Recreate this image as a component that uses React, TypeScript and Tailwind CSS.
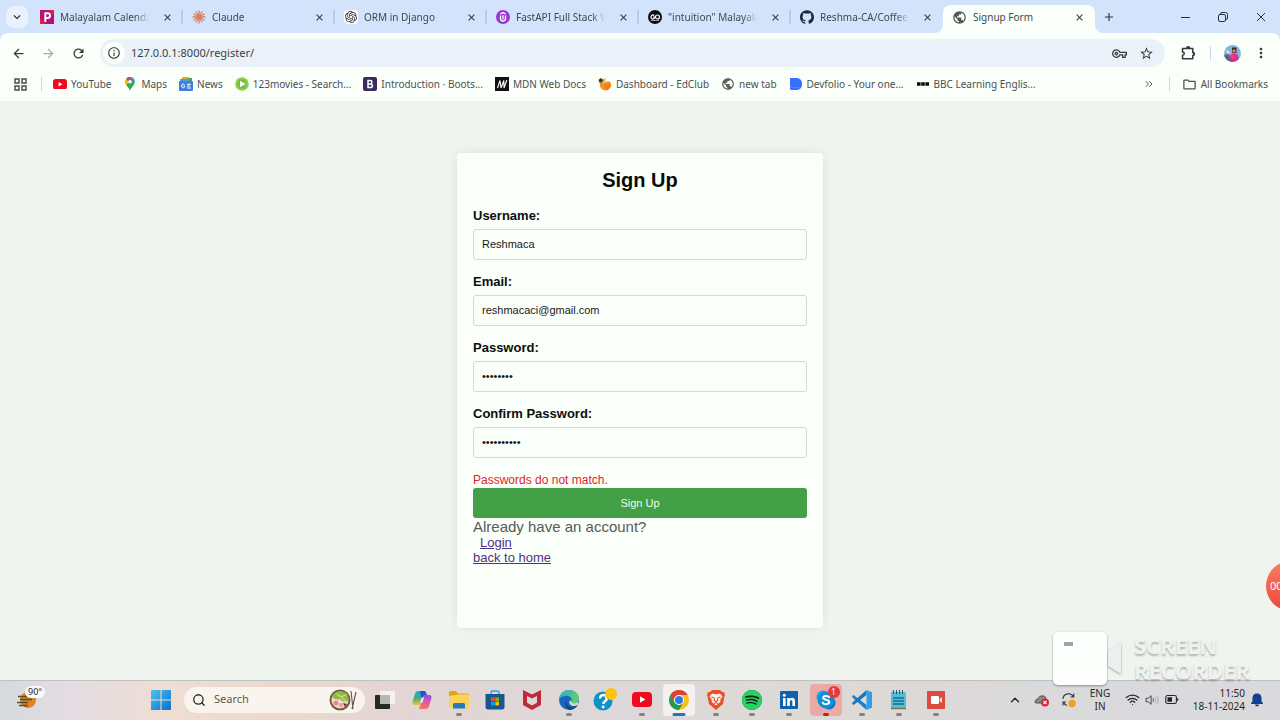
import type { ReactNode } from "react";
import {
  MdArrowBack,
  MdArrowForward,
  MdClose,
  MdExpandMore,
  MdInfoOutline,
  MdMoreVert,
  MdOutlineFolder,
  MdOutlineVpnKey,
  MdPublic,
  MdRefresh,
  MdStarBorder,
  MdAdd,
} from "react-icons/md";
import { SiOpenai, SiSpotify, SiGithub } from "react-icons/si";
import { ChevronUp, ChevronsRight, Search, Wifi } from "lucide-react";

type Item = { label: string; icon: ReactNode };

/* ---------- Favicons ---------- */

const CalendarIcon = () => (
  <svg viewBox="0 0 14 14" className="size-3.5">
    <rect width="14" height="14" fill="#b5107c" />
    <path d="M0 14V8l6 6zM9 0h5v6z" fill="#e5232e" />
    <path d="M5.3 12V3.2h2.4a2.4 2.4 0 0 1 0 4.8H5.3" fill="none" stroke="#fff" strokeWidth="2" />
  </svg>
);

const ClaudeIcon = () => (
  <svg viewBox="0 0 14 14" className="size-3.5" stroke="#dd7d5e" strokeWidth="1.3" strokeLinecap="round">
    <path d="M7 7V1M7 7l3-5.2M7 7l5.2-3M7 7h6M7 7l5 3M7 7l3 5M7 7v6M7 7l-3 5M7 7l-5.200 3M7 7H1M7 7L1.800 4M7 7L4 1.800" />
  </svg>
);

const OpenAiIcon = () => (
  <span className="flex size-3.5 items-center justify-center rounded-sm bg-[#fbfff9]">
    <SiOpenai className="size-3 text-[#2b2f2f]" />
  </span>
);

const UdemyIcon = () => (
  <svg viewBox="0 0 14 14" className="size-3.5">
    <circle cx="7" cy="7" r="7" fill="#9a35cf" />
    <path d="M4.500 5.500v3a2.500 2.500 0 0 0 5 0v-3M7 5.200v4M4.300 4L7 2.600 9.700 4" fill="none" stroke="#fff" strokeWidth="1.300" />
  </svg>
);

const GoIcon = () => (
  <svg viewBox="0 0 14 14" className="size-3.5">
    <circle cx="7" cy="7" r="7" fill="#0b0e10" />
    <path d="M6.300 5.500A2 2 0 1 0 6.300 8.500V7H5" fill="none" stroke="#fff" strokeWidth="1.200" />
    <circle cx="9.500" cy="7" r="2" fill="none" stroke="#fff" strokeWidth="1.200" />
    <path d="M3 10.500h8" stroke="#fff" strokeWidth=".6" />
  </svg>
);

const tabs: Item[] = [
  { label: "Malayalam Calendar", icon: <CalendarIcon /> },
  { label: "Claude", icon: <ClaudeIcon /> },
  { label: "ORM in Django", icon: <OpenAiIcon /> },
  { label: "FastAPI Full Stack We", icon: <UdemyIcon /> },
  { label: "\"intuition\" Malayalam", icon: <GoIcon /> },
  { label: "Reshma-CA/Coffee_s", icon: <SiGithub className="size-3.5 text-[#1d2838]" /> },
  { label: "Signup Form", icon: <MdPublic className="size-[15px] text-[#55595b]" /> },
];

const YouTubeIcon = ({ className }: { className: string }) => (
  <svg viewBox="0 0 20 15" className={className}>
    <rect width="20" height="15" rx="4" fill="#f00a21" />
    <path d="M8 4.300v6.400l5.400-3.200z" fill="#fff" />
  </svg>
);

const MapsIcon = () => (
  <svg viewBox="0 0 14 14" className="size-3.5">
    <path d="M7 14C6.300 10.500 2.200 8.700 2.200 4.800A4.800 4.800 0 0 1 11.800 4.800C11.800 8.700 7.700 10.500 7 14z" fill="#34a853" />
    <path d="M3.300 1.700L7 4.800 3 8.100C1.900 6.300 1.700 3.700 3.300 1.700z" fill="#fbbc04" />
    <path d="M3.300 1.700A4.800 4.800 0 0 1 8.500.2L5 4.300z" fill="#ea4335" />
    <path d="M8.500.2a4.800 4.800 0 0 1 2.900 2.600L7.500 6.500 5.200 4.200z" fill="#4285f4" />
    <circle cx="7" cy="4.800" r="1.700" fill="#fff" />
  </svg>
);

const NewsIcon = () => (
  <svg viewBox="0 0 14 14" className="size-3.5">
    <path d="M3 0h7v4H3z" fill="#e9a928" />
    <path d="M9 1h4v4H9z" fill="#4ba25b" />
    <path d="M1 2h9v4H1z" fill="#4f97d9" />
    <rect y="4" width="14" height="10" rx="1" fill="#3f7fdb" />
    <path d="M5.500 7.500a1.800 1.800 0 1 0 .2 2.500V9H4.500M8 7.300h4M8 9h3M8 11h4" fill="none" stroke="#fff" strokeWidth="1" />
  </svg>
);

const MoviesIcon = () => (
  <svg viewBox="0 0 14 14" className="size-3.5">
    <circle cx="7" cy="7" r="6.800" fill="#8fd04c" />
    <circle cx="7" cy="7" r="4.800" fill="#76bd38" />
    <path d="M5 3.700v6.600L10.600 7z" fill="#fff" />
  </svg>
);

const BootstrapIcon = () => (
  <svg viewBox="0 0 14 14" className="size-3.5">
    <rect width="14" height="14" rx="2" fill="#3b2a5e" />
    <path d="M5 3.500v7h2.600a1.800 1.800 0 0 0 0-3.600H5h2.200a1.700 1.700 0 0 0 0-3.400z" fill="none" stroke="#fff" strokeWidth="1.500" />
  </svg>
);

const MdnIcon = () => (
  <svg viewBox="0 0 14 14" className="size-3.5">
    <rect width="14" height="14" fill="#101010" />
    <path d="M2.500 11L5 3.500 6 11l2.800-7.500L9 11l2.800-8" fill="none" stroke="#fff" strokeWidth="1.100" />
  </svg>
);

const EdClubIcon = () => (
  <svg viewBox="0 0 14 14" className="size-3.5">
    <path d="M2 6C4.500 5 6 6.500 8 5c1.500-1.300 3.500-1 4.500.5 1.500 3-.5 7.500-5 7.900C4 13.500 1 10 2 6z" fill="#f29222" />
    <path d="M6 7c3 1.500 5 .5 7-1 .5 3.500-1.500 7-5 7.300z" fill="#ef7a1a" />
    <path d="M.5 3L2.500 1 5 2.500 4.500 5.500 1.500 5.800z" fill="#4b3513" />
    <path d="M5 2.500L7 1l.5 3.500L5 6z" fill="#f2a93a" />
  </svg>
);

const DevfolioIcon = () => (
  <svg viewBox="0 0 14 14" className="size-3.5">
    <path d="M1 1h6.500C11 1 13 3.500 13 7s-2 6-5.500 6H2.500A1.500 1.500 0 0 1 1 11.500z" fill="#3770ff" />
    <path d="M1 10.500h9" stroke="#6f9bff" strokeWidth=".5" />
  </svg>
);

const BbcIcon = () => (
  <svg viewBox="0 0 14 14" className="size-3.5">
    <path d="M1 5.200h3.600v3.600H1zM5.200 5.200h3.600v3.600H5.200zM9.400 5.200H13v3.600H9.400z" fill="#0a0a0a" />
  </svg>
);

const bookmarks: Item[] = [
  { label: "YouTube", icon: <YouTubeIcon className="w-3.5" /> },
  { label: "Maps", icon: <MapsIcon /> },
  { label: "News", icon: <NewsIcon /> },
  { label: "123movies - Search...", icon: <MoviesIcon /> },
  { label: "Introduction · Boots...", icon: <BootstrapIcon /> },
  { label: "MDN Web Docs", icon: <MdnIcon /> },
  { label: "Dashboard - EdClub", icon: <EdClubIcon /> },
  { label: "new tab", icon: <MdPublic className="size-3.5 text-[#5b5f60]" /> },
  { label: "Devfolio - Your one...", icon: <DevfolioIcon /> },
  { label: "BBC Learning Englis...", icon: <BbcIcon /> },
];

/* ---------- Browser chrome ---------- */

function TabStrip() {
  return (
    <div className="flex h-[33px] items-stretch bg-[#d3e3fb]">
      <div className="flex w-[31px] shrink-0 items-center pl-[6px]">
        <button aria-label="Search tabs" className="flex size-[22px] items-center justify-center rounded-lg bg-[#e9f1fb] text-[#1f2429]">
          <MdExpandMore className="size-[14px]" />
        </button>
      </div>
      <div className="flex min-w-0 max-w-[1064px] flex-1">
        {tabs.map((tab, i) => {
          const active = i === tabs.length - 1;
          return (
            <div key={tab.label} className={"relative min-w-0 flex-1 " + (active ? "pt-[5px]" : "py-[5px]")}>
              <div
                className={
                  "flex items-center " +
                  (active ? "h-7 rounded-t-lg bg-[#fbfff9] pr-1.5 pb-1 pl-[9px]" : "h-6 pl-[9px]")
                }
              >
                <span className="shrink-0">{tab.icon}</span>
                <button
                  className={
                    "ml-1.5 min-w-0 flex-1 overflow-hidden text-left text-[10px] whitespace-nowrap text-[#40484f] " +
                    (active ? "" : "mask-r-from-85% mask-r-to-100%")
                  }
                >
                  {tab.label}
                </button>
                <button aria-label={"Close " + tab.label} className="ml-2 flex size-5 shrink-0 items-center justify-center text-[#263442]">
                  <MdClose className="size-[11px]" />
                </button>
                {!active && <span className={"ml-1 h-3.5 w-0.5 shrink-0 " + (i < tabs.length - 2 ? "bg-[#b4cdf4]" : "")} />}
              </div>
              {active && (
                <>
                  <svg viewBox="0 0 8 8" className="absolute bottom-0 -left-2 size-2">
                    <path d="M8 0v8H0a8 8 0 0 0 8-8z" fill="#fbfff9" />
                  </svg>
                  <svg viewBox="0 0 8 8" className="absolute -right-2 bottom-0 size-2">
                    <path d="M0 0v8h8a8 8 0 0 1-8-8z" fill="#fbfff9" />
                  </svg>
                </>
              )}
            </div>
          );
        })}
      </div>
      <button aria-label="New tab" className="flex w-7 shrink-0 items-center justify-center text-[#2c3945]">
        <MdAdd className="size-[14px]" />
      </button>
      <div className="ml-auto flex shrink-0 text-[#26323c]">
        <button aria-label="Minimise" className="flex w-[38px] items-center justify-center">
          <svg viewBox="0 0 10 10" className="size-2.5" stroke="currentColor"><path d="M1 5.500h9" /></svg>
        </button>
        <button aria-label="Restore" className="flex w-[38px] items-center justify-center">
          <svg viewBox="0 0 10 10" className="size-2.5" fill="none" stroke="currentColor">
            <rect x=".5" y="2.500" width="7" height="7" rx="1.500" />
            <path d="M2.500 2.500V2A1.500 1.500 0 0 1 4 .5h3.500a2 2 0 0 1 2 2V6A1.500 1.500 0 0 1 8 7.500h-.500" />
          </svg>
        </button>
        <button aria-label="Close window" className="flex w-[38px] items-center justify-center">
          <svg viewBox="0 0 10 10" className="size-2.5" stroke="currentColor"><path d="M1 1l8 8M9 1L1 9" /></svg>
        </button>
      </div>
    </div>
  );
}

function Toolbar() {
  return (
    <div className="bg-[#d3e3fb]">
      <div className="flex h-10 items-center rounded-t-lg bg-[#fbfff9] text-[#343a3d]">
        <div className="flex w-[100px] shrink-0 pl-[3px]">
          <button aria-label="Back" className="flex w-[30px] justify-center"><MdArrowBack className="size-[15px]" /></button>
          <button aria-label="Forward" className="flex w-[30px] justify-center text-[#a3a8aa]"><MdArrowForward className="size-[15px]" /></button>
          <button aria-label="Reload" className="flex w-[30px] justify-center"><MdRefresh className="size-[15px]" /></button>
        </div>
        <div className="flex h-7 min-w-0 flex-1 items-center rounded-full bg-[#eaf1f9] px-[3px]">
          <button aria-label="Site information" className="flex size-[22px] items-center justify-center rounded-full bg-[#fbfff9]">
            <MdInfoOutline className="size-[14px]" />
          </button>
          <input
            aria-label="Address"
            defaultValue="127.0.0.1:8000/register/"
            className="ml-1.5 min-w-0 flex-1 bg-transparent text-[11px] text-[#3a3f45] outline-none"
          />
          <button aria-label="Passwords" className="flex w-[27px] justify-center"><MdOutlineVpnKey className="size-[15px]" /></button>
          <button aria-label="Bookmark" className="mr-0.5 flex w-[27px] justify-center"><MdStarBorder className="size-[15px]" /></button>
        </div>
        <button aria-label="Extensions" className="flex w-[45px] shrink-0 justify-center">
          <svg viewBox="0 0 16 16" className="size-4" fill="none" stroke="currentColor" strokeWidth="1.500" strokeLinejoin="round">
            <path d="M2.500 3.500h10.300v4a1.600 1.600 0 0 1 0 3v3.300H2.500v-3.500a1.700 1.700 0 0 0 0-3.400z" />
            <path d="M6.800 3.200a1.400 1.400 0 0 1 2.800 0M13 7.600a1.400 1.400 0 0 1 0 2.800" fill="currentColor" />
          </svg>
        </button>
        <span className="h-3.5 w-px rounded bg-[#c9d9f2]" />
        <button aria-label="Profile" className="ml-[13px] shrink-0">
          <svg viewBox="0 0 17 17" className="size-[17px]">
            <defs><clipPath id="avatar"><circle cx="8.500" cy="8.500" r="8.500" /></clipPath></defs>
            <g clipPath="url(#avatar)">
              <rect width="17" height="17" fill="#85b5dd" />
              <path d="M0 10l5-1 4 8H0z" fill="#4f6690" />
              <path d="M2 5l4 2-2 3z" fill="#f2e7e4" />
              <path d="M6 17l1-7 3-2 4 2 1 7z" fill="#e02c86" />
              <path d="M3 8l5 3 1-2 2 3-2 2-6-4z" fill="#e23f90" />
              <path d="M8 2.500h4.500V8H8z" fill="#40282d" />
              <circle cx="10" cy="6" r="1.700" fill="#c98771" />
            </g>
          </svg>
        </button>
        <button aria-label="Menu" className="flex w-[39px] shrink-0 justify-center"><MdMoreVert className="size-4" /></button>
      </div>
    </div>
  );
}

function BookmarksBar() {
  return (
    <nav className="flex h-7 items-center bg-[#fbfff9] pb-1.5 text-[10px] whitespace-nowrap text-[#4b5052]">
      <button aria-label="Apps" className="flex w-[41px] shrink-0 justify-center">
        <svg viewBox="0 0 13 13" className="size-[13px]" fill="none" stroke="#444a4c" strokeWidth="1.400">
          <path d="M1 1h4v4H1zM8 1h4v4H8zM1 8h4v4H1zM8 8h4v4H8z" />
        </svg>
      </button>
      <span className="h-3.5 w-px shrink-0 bg-[#c9d9f2]" />
      <div className="ml-[11px] flex min-w-0 flex-1 items-center gap-3 overflow-hidden">
        {bookmarks.map((b) => (
          <a key={b.label} href="#" className="flex shrink-0 items-center gap-1">
            {b.icon}
            {b.label}
          </a>
        ))}
      </div>
      <button aria-label="More bookmarks" className="px-3.5"><ChevronsRight className="size-3" /></button>
      <span className="h-3.5 w-px shrink-0 bg-[#c9d9f2]" />
      <a href="#" className="mr-3 ml-3 flex items-center gap-1">
        <MdOutlineFolder className="size-[15px]" />
        All Bookmarks
      </a>
    </nav>
  );
}

/* ---------- Sign-up form ---------- */

const fields = [
  { id: "username", label: "Username:", type: "text", value: "Reshmaca" },
  { id: "email", label: "Email:", type: "email", value: "reshmacaci@gmail.com" },
  { id: "password", label: "Password:", type: "password", value: "abcd1234" },
  { id: "confirm", label: "Confirm Password:", type: "password", value: "abcd123456" },
];

function SignupCard() {
  return (
    <div className="w-full max-w-[366px] rounded bg-[#fbfff9] px-4 pt-4 pb-[63px] font-['Liberation_Sans',Arial,sans-serif] text-[13px] shadow-[0_0_8px_rgba(0,0,0,0.08)]">
      <h2 className="mb-4 text-center text-xl/[23px] font-bold text-[#090b0a]">Sign Up</h2>
      <form onSubmit={(e) => e.preventDefault()}>
        {fields.map((f) => (
          <div key={f.id} className="mb-3.5">
            <label htmlFor={f.id} className="mb-[5px] block leading-4 font-bold text-[#0c0e0d]">{f.label}</label>
            <input
              id={f.id}
              type={f.type}
              defaultValue={f.value}
              className="block h-[31px] w-full rounded-[3px] border border-[#d5d9d5] bg-transparent px-2 pb-0.5 text-[11px] text-[#171918] outline-none"
            />
          </div>
        ))}
        <p className="text-xs/4 text-[#dc2430]">Passwords do not match.</p>
        <button type="submit" className="block h-[30px] w-full rounded-[3px] bg-[#43a047] text-[11px] text-[#f1faef]">Sign Up</button>
      </form>
      <p className="text-[15px]/[17px] text-[#565b57]">Already have an account?</p>
      <a href="#" className="ml-[7px] block w-fit leading-[15px] text-[#55308a] underline">Login</a>
      <a href="#" className="block w-fit leading-[15px] text-[#55308a] underline">back to home</a>
    </div>
  );
}

/* ---------- Taskbar ---------- */

const TaskViewIcon = () => (
  <svg viewBox="0 0 20 20" className="size-5">
    <rect y="5" width="15" height="14" rx="1" fill="#262726" />
    <rect x="5" y="1" width="15" height="13" rx="1" fill="#f5f2ee" />
    <rect x="5" y="5" width="10" height="9" fill="#b9b7b4" />
  </svg>
);

const CopilotIcon = () => (
  <svg viewBox="0 0 20 20" className="size-5">
    <defs>
      <linearGradient id="copA" x1="0" y1="0" x2="0" y2="1"><stop stopColor="#25a8e8" /><stop offset=".5" stopColor="#3fae7d" /><stop offset="1" stopColor="#f2c230" /></linearGradient>
      <linearGradient id="copB" x1="0" y1="0" x2="0" y2="1"><stop stopColor="#8a50df" /><stop offset=".5" stopColor="#df56ac" /><stop offset="1" stopColor="#f77b49" /></linearGradient>
    </defs>
    <path d="M6 1h7L9 13c-.5 1.500-1.500 2-3 2H3c-2 0-3-1.500-2.400-3.500l2.500-8C3.600 2 4.500 1 6 1z" fill="url(#copA)" />
    <path d="M14 19H7l4-12c.5-1.500 1.500-2 3-2h3c2 0 3 1.500 2.400 3.500l-2.500 8C16.400 18 15.500 19 14 19z" fill="url(#copB)" />
    <path d="M8 1h4c1.500 0 2 1 2.500 2.500L15 5h-1c-1.500 0-2.500.5-3 2l-.6 1.800C9 8 8.500 4 8 1z" fill="#2456c8" />
    <path d="M9.700 7.500h2.500l-2 5.500H8z" fill="#efeae8" />
  </svg>
);

const FolderIcon = () => (
  <svg viewBox="0 0 20 20" className="size-5">
    <path d="M0 2.500A1.500 1.500 0 0 1 1.500 1H7l2 2.500h9.500A1.500 1.500 0 0 1 20 5v12H0z" fill="#e3a21a" />
    <path d="M0 6l9-1.500h11v13a1 1 0 0 1-1 1H1a1 1 0 0 1-1-1z" fill="#fcd35a" />
    <path d="M4 18.500v-4A1.500 1.500 0 0 1 5.500 13h9a1.500 1.500 0 0 1 1.500 1.500v4z" fill="#1f7bc4" />
  </svg>
);

const StoreIcon = () => (
  <svg viewBox="0 0 20 20" className="size-5">
    <path d="M6 5V2.500A1.500 1.500 0 0 1 7.500 1h5A1.500 1.500 0 0 1 14 2.500V5" fill="none" stroke="#2ba2df" strokeWidth="1.500" />
    <path d="M.5 4h19v13a2.500 2.500 0 0 1-2.500 2.500H3A2.500 2.500 0 0 1 .5 17z" fill="#195591" />
    <path d="M6 7.500h3.700v3.700H6z" fill="#f25022" /><path d="M10.300 7.500H14v3.700h-3.700z" fill="#7fba00" />
    <path d="M6 11.800h3.700v3.700H6z" fill="#00a4ef" /><path d="M10.300 11.800H14v3.700h-3.700z" fill="#ffb900" />
  </svg>
);

const McAfeeIcon = () => (
  <svg viewBox="0 0 20 20" className="size-5">
    <path d="M1 0l9 4.500L19 0v15l-9 5-9-5zm4 6v6.800l5 2.700 5-2.700V6l-5 2.600z" fill="#bd2b38" fillRule="evenodd" />
  </svg>
);

const EdgeIcon = () => (
  <svg viewBox="0 0 20 20" className="size-5">
    <defs>
      <linearGradient id="edgeA" x1="0" y1="0" x2="1" y2=".3"><stop stopColor="#28a9db" /><stop offset="1" stopColor="#5dd06a" /></linearGradient>
    </defs>
    <circle cx="10" cy="10" r="10" fill="#1869bd" />
    <path d="M0 10C.5 4 5 0 10 0c6 0 10 4 10 8.500 0 3-2.300 4.700-5 4.700-2 0-3-.8-2.500-2C13.500 8 10.500 5.500 7 5.800 3.500 6 1 7.500 0 10z" fill="url(#edgeA)" />
    <path d="M8 8.500c-2 4 1 8.500 5.500 8.500 2 0 3.700-.700 5.300-2-1.800 3.200-5 5-8.500 5C6 18 5 12 8 8.500z" fill="#114a8b" />
    <path d="M12.500 11.200c-.5 1.200.5 2 2.500 2 1.700 0 3.200-.6 4.100-1.800l-.3 3.600c-3 1.500-8 1.500-8.500-2.500 0-2 1.500-2.800 2.200-1.300z" fill="#d9d7d5" />
  </svg>
);

const HelpIcon = () => (
  <svg viewBox="0 0 24 24" className="size-6">
    <circle cx="10" cy="13" r="9.500" fill="#1191c9" />
    <path d="M7 10.500a3.300 3.300 0 1 1 5 2.700c-1.200.7-1.700 1.300-1.700 2.800" fill="none" stroke="#fff" strokeWidth="2.400" />
    <circle cx="10.200" cy="19" r="1.400" fill="#fff" />
    <circle cx="18" cy="6" r="6" fill="#fcc20c" />
  </svg>
);

const ChromeIcon = () => (
  <svg viewBox="0 0 20 20" className="size-5">
    <circle cx="10" cy="10" r="10" fill="#fbc116" />
    <path d="M1.340 5A10 10 0 0 1 18.660 5H10L5.670 12.500z" fill="#df4235" />
    <path d="M1.340 5l4.330 7.500L10 15l4.330-2.500L10 20A10 10 0 0 1 1.340 5z" fill="#239a4c" />
    <circle cx="10" cy="10" r="5" fill="#fff" />
    <circle cx="10" cy="10" r="4" fill="#2f78e4" />
  </svg>
);

const LinkedInIcon = () => (
  <svg viewBox="0 0 18 18" className="size-[18px]">
    <rect width="18" height="18" rx="1" fill="#1060ad" />
    <circle cx="4.300" cy="4.300" r="1.500" fill="#fff" />
    <path d="M3 7h2.600v8H3zM7.200 7h2.500v1.100c1.300-2 5.300-1.800 5.300 2V15h-2.600v-4.400c0-2-2.600-1.800-2.600 0V15H7.200z" fill="#fff" />
  </svg>
);

const SkypeIcon = () => (
  <svg viewBox="0 0 20 20" className="size-5">
    <circle cx="7" cy="7" r="6.500" fill="#1aa6e6" /><circle cx="13" cy="13" r="6.500" fill="#0b72c8" /><circle cx="10" cy="10" r="8.500" fill="#0c90dc" />
    <path d="M13.200 7.200C12 5.500 7.200 5.500 7.200 7.800c0 2.700 6 1.300 6 4.300 0 2.600-5.200 2.600-6.400.600" fill="none" stroke="#fff" strokeWidth="2" strokeLinecap="round" />
  </svg>
);

const CodeIcon = () => (
  <svg viewBox="0 0 20 20" className="size-5">
    <path d="M0 6.300l1.500-1.200 13 10V20L1 8z" fill="#1a7fc6" />
    <path d="M0 13.700l1.500 1.200 13-10V0L1 12z" fill="#1a76bd" />
    <path d="M14.500 0L20 2.300v15.400L14.500 20z" fill="#2f9fe9" />
  </svg>
);

const NotepadIcon = () => (
  <svg viewBox="0 0 18 20" className="h-5 w-[18px]">
    <rect x="1" y="2" width="15" height="17" rx="1" fill="#52bfdb" />
    <path d="M3 8h11M3 11h11M3 14h11" stroke="#1d6c8d" strokeWidth="1.300" />
    <path d="M3.500 0v4M6.500 0v4M9.500 0v4M12.500 0v4" stroke="#26546b" />
    <path d="M1 18.500h15" stroke="#8d6f38" strokeWidth="1.500" />
  </svg>
);

const RecorderIcon = () => (
  <svg viewBox="0 0 18 18" className="size-[18px]">
    <rect width="18" height="18" fill="#dd4a40" />
    <rect x="4" y="5" width="8" height="8" rx="1" fill="#fff" />
    <path d="M12.500 8L15 6v6l-2.500-2z" fill="#fbd9d5" />
  </svg>
);

const BraveIcon = () => (
  <svg viewBox="0 0 20 20" className="size-5">
    <path d="M6 0h8l2 2 2 0 1 3-.7 2L17 14l-7 6-7-6L1.700 7 1 5l1-3h2z" fill="#e9502a" />
    <path d="M6 3.500l4 .7 4-.7 2.500 3-2.300 3.200.3 2L10 15.500l-4.500-3.800.3-2L3.500 6.500z" fill="#fbefe9" />
    <path d="M5.500 7l3 1M14.500 7l-3 1M8.500 8.500L8.200 10.500 10 11.700l1.800-1.200-.3-2M8 13.500l2-1 2 1" fill="none" stroke="#e9502a" strokeWidth="1.100" />
  </svg>
);

type App = Item & { state?: "open" | "active" | "alert"; badge?: string };

const apps: App[] = [
  { label: "Task View", icon: <TaskViewIcon /> },
  { label: "Copilot", icon: <CopilotIcon /> },
  { label: "File Explorer", icon: <FolderIcon />, state: "open" },
  { label: "Store", icon: <StoreIcon /> },
  { label: "McAfee", icon: <McAfeeIcon /> },
  { label: "Edge", icon: <EdgeIcon />, state: "open" },
  { label: "Help", icon: <HelpIcon /> },
  { label: "YouTube", icon: <YouTubeIcon className="w-5" />, state: "open" },
  { label: "Chrome", icon: <ChromeIcon />, state: "active" },
  { label: "Brave", icon: <BraveIcon />, state: "open" },
  {
    label: "Spotify",
    icon: <span className="flex rounded-full bg-[#12241a]"><SiSpotify className="size-5 text-[#25d262]" /></span>,
    state: "open",
  },
  { label: "LinkedIn", icon: <LinkedInIcon />, state: "open" },
  { label: "Skype", icon: <SkypeIcon />, state: "alert", badge: "1" },
  { label: "Code", icon: <CodeIcon />, state: "open" },
  { label: "Notepad", icon: <NotepadIcon />, state: "open" },
  { label: "Recorder", icon: <RecorderIcon />, state: "open" },
];

const slotStyle = { open: "", active: "bg-[#f3f0ed]", alert: "bg-[#ebaaa5]" };
const markStyle = { open: "w-[6px] bg-[#85827f]", active: "w-[13px] bg-[#2477bd]", alert: "w-[6px] bg-[#b4262b]" };

function Taskbar() {
  return (
    <footer className="flex h-10 items-center border-t border-[#bfc2c0] bg-[linear-gradient(90deg,#d5dadd_0%,#e2dce3_5%,#efddd3_13%,#ecd8cd_22%,#e3d5d5_32%,#dcd8d9_50%,#dddad6_62%,#dad9dc_85%,#dad9dc_100%)] pb-0.5 text-[#25282a]">
      <div className="w-[143px] shrink-0 pl-[17px]">
        <button aria-label="Weather" className="relative block">
          <svg viewBox="0 0 20 20" className="size-5">
            <circle cx="11" cy="10" r="8" fill="#dd8424" />
            <path d="M1 6.500h12M3 9.500h12M0 12.500h11M2 15.500h9" stroke="#594c32" strokeWidth="1.300" />
          </svg>
          <span className="absolute -top-1 left-2 rounded-full bg-[#fbf9f6] px-[3px] text-[9px]/[12px]">90°</span>
        </button>
      </div>
      <button aria-label="Start" className="flex w-9 shrink-0 justify-center">
        <svg viewBox="0 0 20 20" className="size-5">
          <defs><linearGradient id="win" x1="0" y1="0" x2="1" y2="1"><stop stopColor="#4cc3ee" /><stop offset="1" stopColor="#0b6fc9" /></linearGradient></defs>
          <path d="M.5 0h9v9.500H0V.5zM10.500 0h9l.5.500v9h-9.500zM0 10.500h9.500V20h-9L0 19.500zM10.500 10.500H20v9l-.5.500h-9z" fill="url(#win)" />
        </svg>
      </button>
      <label className="ml-[5px] flex h-[26px] w-[181px] shrink-0 items-center rounded-full bg-[#faf4ee] pr-2 pl-2">
        <Search className="size-[14px] shrink-0" strokeWidth={2.2} />
        <input type="search" aria-label="Search" placeholder="Search" className="ml-2 min-w-0 flex-1 bg-transparent text-[11px] outline-none placeholder:text-[#5c5854]" />
        <svg viewBox="0 0 28 22" className="h-[22px] w-7 shrink-0">
          <circle cx="11" cy="11" r="10.500" fill="#765a45" />
          <circle cx="11" cy="11" r="8.500" fill="#f4ddd2" />
          <path d="M3 8c1-5 8-7 12-5 4 1 5 5 4 9-3 1-6 1-8-2-3 1-6 0-8-2z" fill="#8cb944" />
          <path d="M8 5l4 3 5-2M13 9l4 3" stroke="#c6de71" strokeWidth="1.500" fill="none" />
          <circle cx="7" cy="14" r="2.500" fill="#e58b8d" /><circle cx="12" cy="16" r="2.300" fill="#eda1a0" />
          <path d="M14 14l4 1-2 3z" fill="#5b3a39" />
          <path d="M22 2l2 18M27 3l-4 17" stroke="#675142" strokeWidth="1.100" />
        </svg>
      </label>
      <div className="ml-0.5 flex h-full w-[587px] shrink-0 items-center">
        {apps.map((app) => (
          <div key={app.label} className="flex flex-1 justify-center">
            <button aria-label={app.label} className={"relative flex h-8 w-8 items-center justify-center rounded " + (app.state ? slotStyle[app.state] : "")}>
              {app.icon}
              {app.state && <span className={"absolute bottom-0 left-1/2 h-[3px] -translate-x-1/2 rounded-full " + markStyle[app.state]} />}
              {app.badge && (
                <span className="absolute top-0.5 right-0.5 flex size-3 items-center justify-center rounded-full bg-[#e03b3d] text-[8px] text-white">{app.badge}</span>
              )}
            </button>
          </div>
        ))}
      </div>
      <div className="ml-auto flex shrink-0 items-center pr-[17px]">
        <button aria-label="Hidden icons" className="flex w-[26px] justify-center"><ChevronUp className="size-3.5" strokeWidth={2.4} /></button>
        <svg viewBox="0 0 16 14" className="mx-[6px] h-3.5 w-4">
          <path d="M1 9c0-2 2-3 3-3 1-4 7-4 8-1l-4 5H3c-1 0-2 0-2-1z" fill="#8a8b89" stroke="#4b4d4c" />
          <circle cx="11" cy="9.500" r="4" fill="#d6273a" />
          <path d="M9.500 8l3 3M12.500 8l-3 3" stroke="#fff" strokeWidth="1.100" />
        </svg>
        <svg viewBox="0 0 16 16" className="mx-[5px] size-4" fill="none" stroke="#36393b" strokeWidth="1.100">
          <path d="M2 7a5.500 5.500 0 0 1 10.500-2M12.800 1.500V5H9.500M6 13.500A5.500 5.500 0 0 1 2.500 10M2 13.500V10h3" />
          <circle cx="11" cy="11.500" r="3.700" fill="#f0a022" stroke="none" />
        </svg>
        <button className="w-9 text-center text-[10px]/[13px]">ENG<br />IN</button>
        <button aria-label="Network, sound and battery" className="ml-1 flex items-center">
          <Wifi className="mx-[3px] size-[15px]" strokeWidth={2} />
          <svg viewBox="0 0 16 14" className="ml-0.5 h-3 w-3.5" fill="none" stroke="#303335">
            <path d="M1 5h2.500L7 2v10L3.500 9H1zM9 5c1 1.200 1 2.800 0 4" />
            <path d="M11 3.500c2 2 2 5 0 7M13 2c3 3 3 7 0 10" stroke="#a9aaac" />
          </svg>
          <svg viewBox="0 0 15 10" className="ml-1.5 h-[9px] w-3.5">
            <rect x=".6" y=".6" width="11.800" height="8.800" rx="2" fill="none" stroke="#222527" strokeWidth="1.200" />
            <rect x="2.500" y="2.500" width="5" height="5" fill="#222527" />
            <path d="M13.200 3.500h1.200v3h-1.200z" fill="#222527" />
          </svg>
        </button>
        <button className="w-[66px] text-right text-[10px]/[13px]">11:50<br />18-11-2024</button>
        <button aria-label="Notifications" className="ml-1.5">
          <svg viewBox="0 0 12 14" className="h-3.5 w-3" fill="#123f8e">
            <path d="M6 .5c3 0 4.500 2 4.500 4.500V8L12 10.500v.5H0v-.5L1.500 8V5C1.500 2.500 3 .5 6 .5zM4 11.500h4a2 2 0 0 1-4 0z" />
          </svg>
        </button>
      </div>
    </footer>
  );
}

/* ---------- Recording overlay ---------- */

function RecorderOverlay() {
  return (
    <>
      <div className="pointer-events-none absolute right-[30px] bottom-[33px] flex items-center">
        <svg viewBox="0 0 72 58" className="h-[58px] w-[72px] drop-shadow-[0_1px_1px_rgba(0,0,0,0.35)]">
          <path d="M56 22l13-9v32l-13-8z" fill="#eceff0" />
          <rect x="1" y="3" width="54" height="53" rx="5" fill="#fcfffb" />
          <path d="M12 13h9v4h-9z" fill="#a2a5a3" />
        </svg>
        <div className="ml-2.5 font-['Open_Sans','Noto_Sans',sans-serif] text-[22px]/[25px] font-bold text-[#eff2ef] [text-shadow:0_2px_2px_rgba(0,0,0,0.25)]">
          SCREEN<br />RECORDER
        </div>
      </div>
      <div className="absolute right-0 bottom-[109px] flex h-[50px] w-3.5 items-center overflow-hidden">
        <button aria-label="Recording time" className="flex size-[50px] shrink-0 items-center rounded-full bg-linear-to-b from-[#f77d60] to-[#f0433c] pl-1 text-[11px] text-white">
          00
        </button>
      </div>
    </>
  );
}

export default function App() {
  return (
    <div className="relative flex min-h-screen flex-col overflow-hidden bg-[#f0f4ef] font-['Noto_Sans','Open_Sans',sans-serif] text-[11px]">
      <header>
        <TabStrip />
        <Toolbar />
        <BookmarksBar />
      </header>
      <main className="flex flex-1 items-center justify-center">
        <SignupCard />
      </main>
      <Taskbar />
      <RecorderOverlay />
    </div>
  );
}
